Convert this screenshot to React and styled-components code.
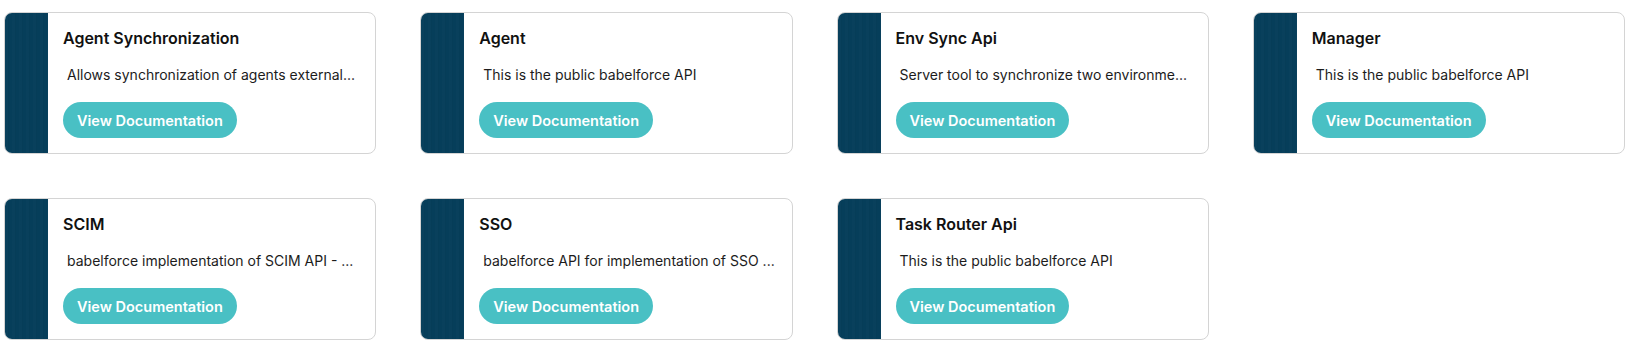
import styled, { createGlobalStyle } from 'styled-components';

const GlobalStyle = createGlobalStyle`
  body {
    margin: 0;
    background-color: white;
    font-family: Inter, "Noto Sans", sans-serif;
  }
`;

const CardGrid = styled.div`
  display: grid;
  grid-template-columns: repeat(4, 1fr);
  column-gap: 44px;
  row-gap: 44px;
  width: 1621px;
  padding: 12px 0 0 4px;
`;

const Card = styled.div`
  display: flex;
  box-sizing: border-box;
  height: 142px;
  border: 1px solid #d4d4d4;
  border-radius: 8px;
  overflow: hidden;
  background-color: white;
`;

const Stripe = styled.div`
  flex: 0 0 43px;
  background-color: #063e5a;
  background-image: repeating-linear-gradient(
    90deg,
    rgba(255, 255, 255, 0.012) 0 3px,
    rgba(0, 0, 0, 0.025) 3px 4px,
    rgba(255, 255, 255, 0) 4px 7px
  );
`;

const CardBody = styled.div`
  flex: 1;
  min-width: 0;
  display: flex;
  flex-direction: column;
  align-items: flex-start;
  padding: 14px 12px 0 15px;
`;

const Title = styled.h3`
  margin: 0;
  font-size: 16px;
  line-height: 22px;
  font-weight: 600;
  color: #111;
`;

const Desc = styled.p`
  margin: 15px 0 0;
  padding-left: 4px;
  font-size: 14px;
  line-height: 22px;
  color: #1c1c1c;
  white-space: nowrap;
`;

const DocButton = styled.button`
  margin-top: 16px;
  height: 36px;
  padding: 0 14px;
  border: none;
  border-radius: 18px;
  background-color: #49c0c4;
  color: white;
  font-family: inherit;
  font-size: 14.5px;
  font-weight: 600;
  cursor: pointer;
`;

const apis = [
  { name: 'Agent Synchronization', desc: 'Allows synchronization of agents external...' },
  { name: 'Agent', desc: 'This is the public babelforce API' },
  { name: 'Env Sync Api', desc: 'Server tool to synchronize two environme...' },
  { name: 'Manager', desc: 'This is the public babelforce API' },
  { name: 'SCIM', desc: 'babelforce implementation of SCIM API - ...' },
  { name: 'SSO', desc: 'babelforce API for implementation of SSO ...' },
  { name: 'Task Router Api', desc: 'This is the public babelforce API' },
];

const App = () => {
  return (
    <>
      <GlobalStyle />
      <CardGrid>
        {apis.map((api) => (
          <Card key={api.name}>
            <Stripe />
            <CardBody>
              <Title>{api.name}</Title>
              <Desc>{api.desc}</Desc>
              <DocButton type="button">View Documentation</DocButton>
            </CardBody>
          </Card>
        ))}
      </CardGrid>
    </>
  );
};

export default App;
